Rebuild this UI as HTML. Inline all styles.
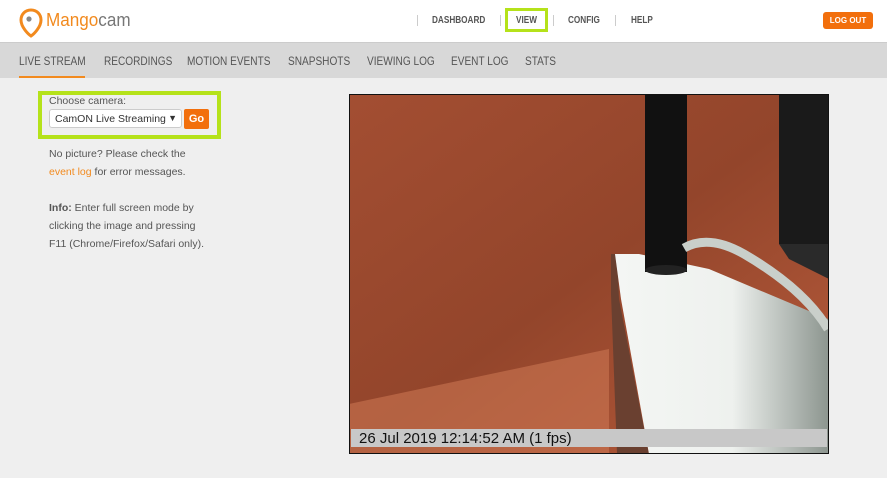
<!DOCTYPE html>
<html><head><meta charset="utf-8"><style>
*{margin:0;padding:0;box-sizing:border-box}
body{width:887px;height:478px;background:#efefef;font-family:"Liberation Sans",Arial,sans-serif;position:relative;overflow:hidden}
.hdr{position:absolute;left:0;top:0;width:887px;height:42px;background:#fff}
.sub{position:absolute;left:0;top:42px;width:887px;height:36px;background:#d8d8d8;border-top:1px solid #ccc}
.sub span{position:absolute;top:11px;font-size:12px;color:#555;transform:scaleX(0.84);transform-origin:left;white-space:nowrap}
.nav{position:absolute;top:15px;font-size:10px;font-weight:bold;color:#555;transform:scaleX(0.82);transform-origin:left;white-space:nowrap}
.sep{position:absolute;top:15px;width:1px;height:11px;background:#ccc}
.t{position:absolute;font-size:10.5px;color:#555;line-height:18px;white-space:nowrap}
</style></head><body>
<div class="hdr">
<svg style="position:absolute;left:18px;top:8px" width="26" height="30" viewBox="0 0 26 30"><path d="M13 2C7 2 3 6.5 3 12c0 7 7 14 10 16 3-2 10-9 10-16 0-5.5-4-10-10-10z" fill="none" stroke="#f28a1e" stroke-width="3"/><circle cx="11" cy="11" r="2.6" fill="#888"/></svg>
<div style="position:absolute;left:46px;top:10px;font-size:18px;color:#f28a1e;transform:scaleX(0.95);transform-origin:left">Mango<span style="color:#777">cam</span></div>
<div class="sep" style="left:417px"></div>
<div class="nav" style="left:432px">DASHBOARD</div>
<div class="sep" style="left:500px"></div>
<div style="position:absolute;left:505px;top:8px;width:43px;height:24px;border:3px solid #b5e21a"></div>
<div class="nav" style="left:516px">VIEW</div>
<div class="sep" style="left:553px"></div>
<div class="nav" style="left:568px">CONFIG</div>
<div class="sep" style="left:615px"></div>
<div class="nav" style="left:631px">HELP</div>
<div style="position:absolute;left:823px;top:12px;width:50px;height:17px;background:#f26f0c;border-radius:3px;color:#fff;font-size:8px;font-weight:bold;text-align:center;line-height:17px">LOG OUT</div>
</div>
<div class="sub">
<span style="left:19px">LIVE STREAM</span>
<div style="position:absolute;left:19px;top:33px;width:66px;height:2px;background:#f28a1e"></div>
<span style="left:104px">RECORDINGS</span>
<span style="left:187px">MOTION EVENTS</span>
<span style="left:288px">SNAPSHOTS</span>
<span style="left:367px">VIEWING LOG</span>
<span style="left:451px">EVENT LOG</span>
<span style="left:525px">STATS</span>
</div>
<div style="position:absolute;left:38px;top:91px;width:183px;height:48px;border:4px solid #b5e21a"></div>
<div class="t" style="left:49px;top:94px;line-height:14px">Choose camera:</div>
<div style="position:absolute;left:49px;top:109px;width:133px;height:19px;background:#fff;border:1px solid #ccc;border-radius:3px;font-size:10.5px;color:#333;padding:3px 0 0 5px;white-space:nowrap">CamON Live Streaming<span style="position:absolute;right:4px;top:3px;font-size:9px">▼</span></div>
<div style="position:absolute;left:184px;top:109px;width:25px;height:20px;background:#f26f0c;border-radius:2px;color:#fff;font-size:11px;font-weight:bold;text-align:center;line-height:20px">Go</div>
<div class="t" style="left:49px;top:145px">No picture? Please check the<br><span style="color:#f28a1e">event log</span> for error messages.<br><br><b>Info:</b> Enter full screen mode by<br>clicking the image and pressing<br>F11 (Chrome/Firefox/Safari only).</div>
<svg style="position:absolute;left:349px;top:94px" width="480" height="360" viewBox="0 0 480 360">
<defs>
<linearGradient id="w" x1="0" y1="0" x2="1" y2="1"><stop offset="0" stop-color="#a34e32"/><stop offset="0.5" stop-color="#93452b"/><stop offset="1" stop-color="#b85c3c"/></linearGradient>
<linearGradient id="s" x1="0" y1="0" x2="1" y2="0"><stop offset="0" stop-color="#f4f6f4"/><stop offset="0.55" stop-color="#eef1ee"/><stop offset="1" stop-color="#8d9690"/></linearGradient>
</defs>
<rect width="480" height="360" fill="url(#w)"/>
<polygon points="0,310 260,255 260,360 0,360" fill="#d07a55" opacity="0.55"/>
<polygon points="262,160 268,160 270,205 300,360 268,360 262,200" fill="#6a4030"/>
<polygon points="266,160 290,160 360,175 479,225 479,360 300,360 272,205" fill="url(#s)"/>
<rect x="296" y="0" width="42" height="178" fill="#111"/>
<ellipse cx="317" cy="176" rx="21" ry="5" fill="#222"/>
<path d="M335 154 Q360 140 395 160 Q455 195 479 235" fill="none" stroke="#c9cfca" stroke-width="9"/>
<rect x="430" y="0" width="50" height="150" fill="#1a1a1a"/>
<polygon points="430,150 480,150 480,185 440,165" fill="#2a2a2a"/>
<rect x="0" y="0" width="480" height="360" fill="none" stroke="#111" stroke-width="2"/>
<rect x="2" y="335" width="476" height="18" fill="#c8c8c8"/>
<text x="10" y="349" font-family="Liberation Sans,sans-serif" font-size="15" fill="#111">26 Jul 2019 12:14:52 AM (1 fps)</text>
</svg>
</body></html>
